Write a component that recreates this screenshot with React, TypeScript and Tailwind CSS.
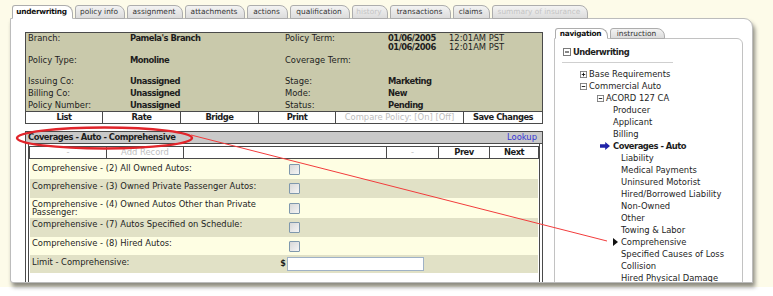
import React from "react";

type Tab = { label: string; w: string; kind: "active" | "normal" | "disabled" };

const mainTabs: Tab[] = [
  { label: "underwriting", w: "w-[61px]", kind: "active" },
  { label: "policy info", w: "w-[50px]", kind: "normal" },
  { label: "assignment", w: "w-[56px]", kind: "normal" },
  { label: "attachments", w: "w-[60px]", kind: "normal" },
  { label: "actions", w: "w-[41px]", kind: "normal" },
  { label: "qualification", w: "w-[60px]", kind: "normal" },
  { label: "history", w: "w-[36px]", kind: "disabled" },
  { label: "transactions", w: "w-[61px]", kind: "normal" },
  { label: "claims", w: "w-[37px]", kind: "normal" },
  { label: "summary of insurance", w: "w-[96px]", kind: "disabled" },
];

const TabButton = ({ tab, h }: { tab: Tab; h: string }) => {
  const base = `${tab.w} ${h} flex items-center justify-center pr-[2px] text-[7.4px] border border-[#adadad] rounded-tl-[3px] rounded-tr-[8px] whitespace-nowrap`;
  if (tab.kind === "active")
    return (
      <div className={`${base} bg-white border-b-white font-bold tracking-[-0.3px] text-[#111]`}>{tab.label}</div>
    );
  return (
    <div
      className={`${base} bg-gradient-to-b from-[#f3f3f3] to-[#dcdcdc] ${
        tab.kind === "disabled" ? "text-[#c4c4c4]" : "text-[#333]"
      }`}
    >
      {tab.label}
    </div>
  );
};

const Checkbox = () => (
  <div className="w-[11px] h-[11px] rounded-[1px] border border-[#7f98ad] bg-gradient-to-br from-[#d8d8d8] to-[#f5f5f5]" />
);

const BoxIcon = ({ plus, size = "w-[7px] h-[7px]" }: { plus?: boolean; size?: string }) => (
  <svg viewBox="0 0 8 8" className={`${size} shrink-0`}>
    <rect x="0.5" y="0.5" width="7" height="7" fill="white" stroke="#7a7a7a" />
    <line x1="2" y1="4" x2="6" y2="4" stroke="#111" strokeWidth="1" />
    {plus && <line x1="4" y1="2" x2="4" y2="6" stroke="#111" strokeWidth="1" />}
  </svg>
);

const BlueArrow = () => (
  <svg viewBox="0 0 10 8" className="w-[10px] h-[8px] shrink-0">
    <path d="M0 2.3h5.2V0L10 4 5.2 8V5.7H0z" fill="#1f23a8" />
  </svg>
);

const BlackTri = () => (
  <svg viewBox="0 0 5 8" className="w-[5px] h-[8px] shrink-0">
    <path d="M0 0L5 4 0 8z" fill="#111" />
  </svg>
);

type TreeItem = { t: string; pad: string; icon?: "plus" | "minus" | "arrow" | "tri"; bold?: boolean };

const tree: TreeItem[] = [
  { t: "Base Requirements", pad: "pl-[25px]", icon: "plus" },
  { t: "Commercial Auto", pad: "pl-[25px]", icon: "minus" },
  { t: "ACORD 127 CA", pad: "pl-[42px]", icon: "minus" },
  { t: "Producer", pad: "pl-[58px]" },
  { t: "Applicant", pad: "pl-[58px]" },
  { t: "Billing", pad: "pl-[58px]" },
  { t: "Coverages - Auto", pad: "pl-[45px]", icon: "arrow", bold: true },
  { t: "Liability", pad: "pl-[66px]" },
  { t: "Medical Payments", pad: "pl-[66px]" },
  { t: "Uninsured Motorist", pad: "pl-[66px]" },
  { t: "Hired/Borrowed Liability", pad: "pl-[66px]" },
  { t: "Non-Owned", pad: "pl-[66px]" },
  { t: "Other", pad: "pl-[66px]" },
  { t: "Towing & Labor", pad: "pl-[66px]" },
  { t: "Comprehensive", pad: "pl-[58px]", icon: "tri" },
  { t: "Specified Causes of Loss", pad: "pl-[66px]" },
  { t: "Collision", pad: "pl-[66px]" },
  { t: "Hired Physical Damage", pad: "pl-[66px]" },
];

const TreeRow = ({ item }: { item: TreeItem }) => (
  <div className={`flex items-center h-[12px] leading-[12px] whitespace-nowrap ${item.pad}`}>
    {item.icon === "plus" && <BoxIcon plus />}
    {item.icon === "minus" && <BoxIcon />}
    {item.icon === "arrow" && <BlueArrow />}
    {item.icon === "tri" && <BlackTri />}
    <span
      className={`${item.icon === "plus" || item.icon === "minus" ? "ml-[2px]" : item.icon ? "ml-[3px]" : ""} ${
        item.bold ? "font-bold tracking-[-0.5px]" : ""
      }`}
    >
      {item.t}
    </span>
  </div>
);

const buttons = [
  { t: "List", w: "w-[76px]" },
  { t: "Rate", w: "w-[78px] border-l" },
  { t: "Bridge", w: "w-[78px] border-l" },
  { t: "Print", w: "w-[77px] border-l" },
  { t: "Compare Policy: [On] [Off]", w: "w-[128px] border-l", off: true },
  { t: "Save Changes", w: "flex-1 border-l" },
];

const rows = [
  { t: "Comprehensive - (2) All Owned Autos:", h: "h-[20px] bg-[#fefee3]", shift: "mb-[2px]" },
  { t: "Comprehensive - (3) Owned Private Passenger Autos:", h: "h-[19px] bg-[#e1e1c6]", shift: "mb-[5px]" },
  {
    t: "Comprehensive - (4) Owned Autos Other than Private Passenger:",
    h: "h-[20px] bg-[#fefee3]",
    shift: "mb-[0px]",
  },
  { t: "Comprehensive - (7) Autos Specified on Schedule:", h: "h-[19px] bg-[#e1e1c6]", shift: "mb-[6px]" },
  { t: "Comprehensive - (8) Hired Autos:", h: "h-[18px] bg-[#fefee3]", shift: "mb-[6px]" },
];

const B = "font-bold tracking-[-0.5px]";

export default function App() {
  return (
    <div className="relative w-[773px] h-[296px] overflow-hidden bg-white font-['DejaVu_Sans',sans-serif] text-[8.4px] text-[#1d1d1d]">
      <div className="h-[287px] bg-[#fdfbe9] pt-[5px] pl-[10px]">
        {/* main tabs */}
        <div className="relative z-10 flex gap-[2px] pl-[2px] -mb-px">
          {mainTabs.map((tab) => (
            <TabButton key={tab.label} tab={tab} h="h-[14px]" />
          ))}
        </div>

        {/* panel */}
        <div className="flex w-[743px] h-[265px] overflow-hidden bg-white border border-[#bcbcbc] rounded-tr-[9px] rounded-bl-[3px] shadow-[2px_4px_4px_rgba(0,0,0,0.45)]">
          {/* left column */}
          <div className="ml-[14px] mt-[13px] w-[518px] shrink-0">
            <div className="border border-[#4a4a4a] bg-[#c9c9ab]">
              <div className="pl-[2px]">
                <div className="flex h-[10px] leading-[10px] whitespace-nowrap">
                  <span className="w-[102px]">Branch:</span>
                  <span className={`w-[155px] ${B}`}>Pamela's Branch</span>
                  <span className="w-[103px]">Policy Term:</span>
                  <span className={`w-[61px] ${B}`}>01/06/2005</span>
                  <span>12:01AM PST</span>
                </div>
                <div className="flex h-[8px] leading-[8px] whitespace-nowrap">
                  <span className="w-[360px]" />
                  <span className={`w-[61px] ${B}`}>01/06/2006</span>
                  <span>12:01AM PST</span>
                </div>
                <div className="flex h-[12px] leading-[12px] mt-[3px] whitespace-nowrap">
                  <span className="w-[102px]">Policy Type:</span>
                  <span className={`w-[155px] ${B}`}>Monoline</span>
                  <span className="w-[103px]">Coverage Term:</span>
                </div>
                <div className="flex h-[12px] leading-[12px] mt-[9px] whitespace-nowrap">
                  <span className="w-[102px]">Issuing Co:</span>
                  <span className={`w-[155px] ${B}`}>Unassigned</span>
                  <span className="w-[103px]">Stage:</span>
                  <span className={B}>Marketing</span>
                </div>
                <div className="flex h-[12px] leading-[12px] whitespace-nowrap">
                  <span className="w-[102px]">Billing Co:</span>
                  <span className={`w-[155px] ${B}`}>Unassigned</span>
                  <span className="w-[103px]">Mode:</span>
                  <span className={B}>New</span>
                </div>
                <div className="flex h-[12px] leading-[12px] whitespace-nowrap">
                  <span className="w-[102px]">Policy Number:</span>
                  <span className={`w-[155px] ${B}`}>Unassigned</span>
                  <span className="w-[103px]">Status:</span>
                  <span className={B}>Pending</span>
                </div>
              </div>
              <div className="flex h-[12px] border-t border-[#4a4a4a] bg-white">
                {buttons.map((b) => (
                  <div
                    key={b.t}
                    className={`${b.w} border-[#4a4a4a] flex items-center justify-center leading-[11px] whitespace-nowrap ${
                      b.off ? "text-[#bdbdbd]" : B
                    }`}
                  >
                    {b.t}
                  </div>
                ))}
              </div>
            </div>

            {/* section header */}
            <div className="mt-[7px] h-[13px] border border-[#4a4a4a] bg-[#c9c9c9] flex items-center justify-between pl-[2px] pr-[5px] leading-[11px]">
              <span className={B}>Coverages - Auto - Comprehensive</span>
              <span className="text-[#3535d6]">Lookup</span>
            </div>

            {/* record area */}
            <div className="h-[160px] border-x-[4px] border-double border-[#4a4a4a] pt-[2px]">
              <div className="flex h-[13px] border-y border-r border-l border-[#4a4a4a] leading-[11px] text-[#c0c0c0]">
                <div className="w-[76px] flex items-center justify-center">-</div>
                <div className="w-[77px] border-l border-[#4a4a4a] flex items-center justify-center">Add Record</div>
                <div className="w-[203px] border-l border-[#4a4a4a]" />
                <div className="w-[52px] border-l border-[#4a4a4a] flex items-center justify-center">-</div>
                <div className={`w-[51px] border-l border-[#4a4a4a] flex items-center justify-center text-[#1d1d1d] ${B}`}>
                  Prev
                </div>
                <div className={`flex-1 border-l border-[#4a4a4a] flex items-center justify-center text-[#1d1d1d] ${B}`}>
                  Next
                </div>
              </div>

              <div className="mx-[1px]">
                {rows.map((r) => (
                  <div key={r.t} className={`flex items-center ${r.h}`}>
                    <div className={`w-[259px] pl-[2px] leading-[8.5px] ${r.shift}`}>{r.t}</div>
                    <Checkbox />
                  </div>
                ))}
                <div className="flex items-center h-[18px] bg-[#e1e1c6]">
                  <div className="w-[250px] pl-[2px] leading-[9px] mb-[3px]">Limit - Comprehensive:</div>
                  <span className="w-[6px] text-center font-bold text-[8px]">$</span>
                  <div className="ml-[1px] w-[137px] h-[14px] border border-[#9fb2c6] bg-white" />
                </div>
              </div>
            </div>
          </div>

          {/* navigation column */}
          <div className="ml-[11px] mt-[9px] w-[189px] shrink-0">
            <div className="relative z-10 flex gap-[2px] pl-[1px] -mb-px">
              <TabButton tab={{ label: "navigation", w: "w-[53px]", kind: "active" }} h="h-[11px]" />
              <TabButton tab={{ label: "instruction", w: "w-[55px]", kind: "normal" }} h="h-[11px]" />
            </div>
            <div className="h-[260px] border border-[#c2c2c2] rounded-tr-[6px] pt-[7px]">
              <div className="flex items-center h-[12px] pl-[8px]">
                <BoxIcon size="w-[8px] h-[8px]" />
                <span className={`ml-[2px] ${B}`}>Underwriting</span>
              </div>
              <div className="ml-[7px] mt-[4px] w-[111px] h-px bg-[#cfcfcf]" />
              <div className="mt-[5px]">
                {tree.map((item) => (
                  <TreeRow key={item.t} item={item} />
                ))}
              </div>
            </div>
          </div>
        </div>
      </div>

      {/* red annotation */}
      <svg className="absolute inset-0 pointer-events-none" width="773" height="296" viewBox="0 0 773 296">
        <ellipse cx="104.5" cy="138" rx="87.5" ry="10.5" fill="none" stroke="#e1252b" strokeWidth="2.4" />
        <line x1="191" y1="135" x2="607" y2="241" stroke="#f23c3c" strokeWidth="1" />
      </svg>
    </div>
  );
}
